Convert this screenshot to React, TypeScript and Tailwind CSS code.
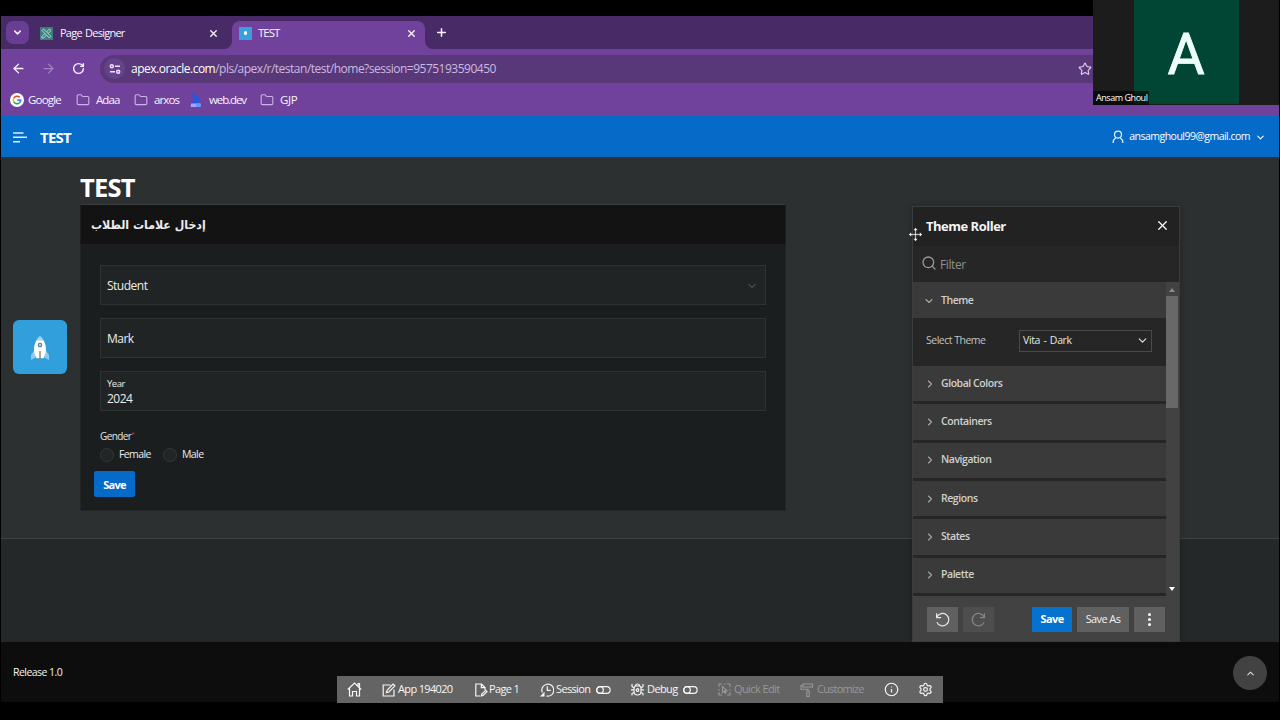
import React from "react";
import {
  ChevronDown,
  ChevronRight,
  ChevronUp,
  X,
  Plus,
  ArrowLeft,
  ArrowRight,
  RotateCw,
  Folder,
  Star,
  Search,
  Info,
  Settings,
} from "lucide-react";

type IconProps = { className?: string };

const ApexIcon = () => (
  <svg className="h-[13px] w-[13px]" viewBox="0 0 13 13">
    <rect width="13" height="13" fill="#3b7f7d" />
    <g stroke="#c0ddd4" strokeWidth="1" fill="none">
      <path d="M2 3.6 3.6 2l7.4 7.4L9.4 11zM9.4 2 11 3.6 8.2 6.4M4.8 6.6 2 9.4 1.9 11.1 3.6 11l2.8-2.8M6.5 4.9 9.4 2" />
    </g>
  </svg>
);

const TuneIcon = () => (
  <svg className="h-3 w-3" viewBox="0 0 12 12" fill="none" stroke="#efe4fa" strokeWidth="1.5">
    <circle cx="2.8" cy="3.2" r="1.5" />
    <path d="M6 3.2h5M1 8.8h5" />
    <circle cx="9.2" cy="8.8" r="1.5" />
  </svg>
);

const GoogleIcon = () => (
  <svg className="h-[14px] w-[14px]" viewBox="0 0 14 14" fill="none" strokeWidth="1.6">
    <circle cx="7" cy="7" r="7" fill="#fff" />
    <path d="M9.6 4.3A3.7 3.7 0 0 0 3.8 5.2" stroke="#ea4335" />
    <path d="M3.8 5.2a3.7 3.7 0 0 0 0 3.6" stroke="#fbbc05" />
    <path d="M3.8 8.8a3.7 3.7 0 0 0 5.6 1" stroke="#34a853" />
    <path d="M9.4 9.8A3.7 3.7 0 0 0 10.7 7.1H7.2" stroke="#4285f4" />
  </svg>
);

const WebDevIcon = () => (
  <svg className="h-[15px] w-[12px]" viewBox="0 0 12 15">
    <path d="M2.5 0 9 4.8c1.4 1.2 1.4 2.6 0 3.8L7.6 10H1l4.2-3.4L1.8 3z" fill="#2456e8" />
    <path d="M1 10.6h9.6v2.2c0 .8-.5 1.3-1.3 1.3H1.6c-.8 0-1-.6-.8-1.3z" fill="#a9a4fb" />
    <path d="M6 10.6h4.6v2.2c0 .8-.5 1.3-1.3 1.3H6z" fill="#5f9bfb" />
  </svg>
);

const UserIcon = () => (
  <svg className="h-[14px] w-3" viewBox="0 0 12 14" fill="none" stroke="#e4f3ff" strokeWidth="1.2">
    <circle cx="6" cy="4.6" r="3.5" />
    <path d="M1 13c.1-2.6 1-4 2.800-5.200M11 13c-.1-2.6-1-4-2.800-5.200" />
  </svg>
);

const RocketIcon = () => (
  <svg className="mt-px h-6 w-5" viewBox="0 0 20 24">
    <path d="M10 0c2 1.200 3.200 3 3.600 5H6.400C6.800 3 8 1.200 10 0z" fill="#a5d3f0" />
    <path d="M4.500 14 1 19v5l4.600-2.600zM15.500 14l3.500 5v5l-4.600-2.600z" fill="#8fcaf0" />
    <path d="M6.300 4.500h7.400c2 3.700 2.700 7.500 2 11.500-.4 2.500-1.200 4.500-2.200 6.300h-7c-1-1.800-1.800-3.800-2.200-6.300-.7-4 0-7.800 2-11.500z" fill="#fff" />
    <circle cx="10" cy="9" r="1.700" fill="#c6dbe6" stroke="#4f7388" strokeWidth="1.100" />
    <path d="M10 15v8" stroke="#8a8078" strokeWidth="1.400" />
  </svg>
);

const UndoIcon = ({ className }: IconProps) => (
  <svg className={className} viewBox="0 0 16 16" fill="none" stroke="currentColor" strokeWidth="1.3">
    <path d="M1.700 1.200v4.800h4.800M2 5.600A6.600 6.600 0 1 1 2 10.800" />
  </svg>
);

const HomeIcon = () => (
  <svg className="h-[15px] w-[15px]" viewBox="0 0 15 15" fill="none" stroke="currentColor" strokeWidth="1.2">
    <path d="M.8 7.500 7.500 1l6.700 6.500M2.500 6v8h3V9.500h4V14h3V6M11 4.200V1.500h1.500v4" />
  </svg>
);
const EditIcon = () => (
  <svg className="h-[14px] w-[14px]" viewBox="0 0 14 14" fill="none" stroke="currentColor" strokeWidth="1.2">
    <path d="M8.500 2H1.200v11H12V6.500M4.500 9.700l.6-2.400L11 1l1.900 1.800-6 6.200z" />
  </svg>
);
const PageIcon = () => (
  <svg className="h-[14px] w-[14px]" viewBox="0 0 14 14" fill="none" stroke="currentColor" strokeWidth="1.2">
    <path d="M6 13H1.800V1h5.700L11 4.500V7M7.300 1v3.700H11M7.300 12.900l.4-1.900 4-3.600 1.300 1.400-4 3.600z" />
  </svg>
);
const SessionIcon = () => (
  <svg className="h-[14px] w-[14px]" viewBox="0 0 14 14" fill="none" stroke="currentColor" strokeWidth="1.2">
    <path d="M2.300 9.500A6 6 0 1 1 6.500 13M7.300 3.300v4h3.400" />
    <path d="M4.500 8.800v4.700H0z" fill="currentColor" stroke="none" />
  </svg>
);
const BugIcon = () => (
  <svg className="h-[13px] w-[13px]" viewBox="0 0 13 13" fill="none" stroke="currentColor" strokeWidth="1.2">
    <path d="M3 5.500c0-1 .5-2 1.200-2.500h4.600C9.500 3.500 10 4.500 10 5.500v3a3.500 3.500 0 0 1-7 0zM4.500 3a2 2 0 0 1 4 0M0 6.800h3M10 6.800h3M3 5 1 3.500V1M10 5l2-1.500V1M3.300 9.300 1 10.500v2M9.700 9.300 12 10.500v2" />
    <circle cx="6.500" cy="7" r="1.300" />
  </svg>
);
const QuickEditIcon = () => (
  <svg className="h-[13px] w-[13px]" viewBox="0 0 13 13" fill="none" stroke="currentColor" strokeWidth="1.1">
    <path d="M1 4V1h3M9 1h3v3M12 9v3H9M4 12H1V9M6 1h1.500M1 6v1.500M12 6v1.500" />
    <path d="M4.500 3.500v6l1.500-1.300 1 2 1-.5-.9-1.900H9z" />
  </svg>
);
const RollerIcon = () => (
  <svg className="h-[14px] w-[14px]" viewBox="0 0 14 14" fill="none" stroke="currentColor" strokeWidth="1.1">
    <path d="M3 1h9.500v3H3zM3 2.500H1v3.700h7V8M6.800 8h2.400v5.500H6.800z" />
  </svg>
);
const ToggleIcon = () => (
  <svg className="h-2 w-[15px]" viewBox="0 0 15 8" fill="none" stroke="currentColor" strokeWidth="1.2">
    <rect x=".7" y=".7" width="13.400" height="6.600" rx="3.300" />
    <rect x=".7" y=".7" width="6.600" height="6.600" rx="3.300" />
  </svg>
);

const MoveCursor = () => (
  <svg className="absolute left-[908px] top-[227px] h-[15px] w-[15px]" viewBox="0 0 15 15">
    <path
      d="M7.500 .5 10 3.500H8.200v3.300h3.300V5l3 2.500-3 2.500V8.200H8.200v3.300H10l-2.500 3-2.500-3h1.800V8.200H3.500V10l-3-2.500 3-2.500v1.800h3.300V3.500H5z"
      fill="#fff"
      stroke="#000"
      strokeWidth=".5"
    />
  </svg>
);

const bookmarks = [
  { label: "Adaa", cls: "w-[58px]" },
  { label: "arxos", cls: "w-[56px]" },
];

const sections = ["Global Colors", "Containers", "Navigation", "Regions", "States", "Palette"];

const BrowserChrome = () => (
  <div className="flex h-[100px] shrink-0 flex-col bg-[#70429c] text-[#f8f2fd]">
    <div className="flex h-[33px] bg-[#482b66] pl-[5px]">
      <div className="mt-[5px] flex h-[23px] w-[23px] items-center justify-center rounded-[7px] bg-[#6a3d95]">
        <ChevronDown size={11} strokeWidth={3.200} />
      </div>
      <div className="flex h-[34px] w-[203px] items-center pl-[11px] pr-[13px]">
        <ApexIcon />
        <span className="ml-[7px] whitespace-nowrap text-[11px] tracking-[-0.75px] [word-spacing:1px]">Page Designer</span>
        <X className="ml-auto" size={11} strokeWidth={3} />
      </div>
      <div className="relative mt-[5px] flex h-7 w-[193px] items-center rounded-t-[8px] bg-[#70429c] pb-1 pl-[7px] pr-[8px]">
        <svg className="absolute -left-[8px] bottom-0 h-2 w-2" viewBox="0 0 8 8">
          <path d="M8 0v8H0a8 8 0 0 0 8-8z" fill="#70429c" />
        </svg>
        <svg className="absolute -right-[8px] bottom-0 h-2 w-2" viewBox="0 0 8 8">
          <path d="M0 0v8h8a8 8 0 0 1-8-8z" fill="#70429c" />
        </svg>
        <div className="flex h-[13px] w-[13px] items-center justify-center bg-[#3aa0dd]">
          <div className="h-1 w-[3px] rounded-full bg-white" />
        </div>
        <span className="ml-[6px] text-[11.5px] tracking-[-1px]">TEST</span>
        <X className="ml-auto" size={11} strokeWidth={3} />
      </div>
      <Plus className="ml-[10px] mt-[10px]" size={13} strokeWidth={2.800} />
    </div>
    <div className="flex h-[39px] items-center pl-[10px]">
      <ArrowLeft size={15} strokeWidth={2.200} />
      <ArrowRight className="ml-[15px] text-[#a183c2]" size={15} strokeWidth={2} />
      <RotateCw className="ml-4" size={13} strokeWidth={2.500} />
      <div className="ml-[15px] flex h-7 flex-1 items-center rounded-l-full bg-[#583878] pl-1">
        <div className="flex h-[21px] w-[21px] items-center justify-center rounded-full bg-[#66428c]">
          <TuneIcon />
        </div>
        <span className="ml-[6px] mt-px whitespace-nowrap text-[12px] tracking-[-0.5px] text-[#cdb8e0]">
          <span className="text-white">apex.oracle.com</span>/pls/apex/r/testan/test/home?session=9575193590450
        </span>
        <Star className="ml-auto mr-[187px] text-[#dccbee]" size={14} strokeWidth={2} />
      </div>
    </div>
    <div className="flex h-6 items-center pl-[9px] text-[11.5px] tracking-[-0.7px]">
      <GoogleIcon />
      <span className="ml-[4px] w-[48px] tracking-[-0.8px]">Google</span>
      {bookmarks.map((b) => (
        <div key={b.label} className={`flex items-center ${b.cls}`}>
          <Folder className="w-[14px] text-[#cdb2ea]" size={14} strokeWidth={1.900} />
          <span className="ml-[6px] tracking-[-0.9px]">{b.label}</span>
        </div>
      ))}
      <WebDevIcon />
      <span className="ml-[7px] w-[51px] tracking-[-1.1px]">web.dev</span>
      <Folder className="text-[#cdb2ea]" size={14} strokeWidth={1.900} />
      <span className="ml-[6px] tracking-[-0.4px]">GJP</span>
    </div>
  </div>
);

const AppHeader = () => (
  <div className="flex h-[41px] shrink-0 items-center bg-[#056ac8] pl-3 pr-[13px] pt-px text-white">
    <svg className="h-[11px] w-[14px]" viewBox="0 0 14 11" stroke="#d5f3ff" strokeWidth="1.400">
      <path d="M0 1h10.500M0 5.300h14M0 9.700h7" />
    </svg>
    <span className="ml-[13px] mt-px text-[15px] font-bold tracking-[-0.8px]">TEST</span>
    <div className="ml-auto flex items-center">
      <UserIcon />
      <span className="ml-[5px] mr-[5px] whitespace-nowrap text-[10.5px] tracking-[-0.52px] text-white">ansamghoul99@gmail.com</span>
      <ChevronDown size={11} strokeWidth={2.200} />
    </div>
  </div>
);

const field = "flex h-10 w-[666px] border border-[#2e3233] bg-[#212425] px-[6px] text-[12px] tracking-[-0.5px] text-[#ededed]";

const FormRegion = () => (
  <div className="w-[706px]">
    <div className="flex h-[41px] items-center border border-[#1d1f1f] border-t-[#3a3d3e] bg-[#131313] px-[10px] pt-[2px]">
      <h2 dir="rtl" className="font-['DejaVu_Sans_Condensed','DejaVu_Sans',sans-serif] text-[12.25px] font-bold [font-stretch:75%] text-[#ececec]">إدخال علامات الطلاب</h2>
    </div>
    <div className="h-[266px] border border-t-0 border-[#222627] bg-[#1b1e1f] pl-[13px] pt-5">
      <div className="flex flex-col gap-[13px] pl-[6px]">
        <div className={`${field} items-center justify-between pt-[2px]`}>
          <span>Student</span>
          <ChevronDown className="mr-[1px] text-[#6f7374]" size={12} strokeWidth={1.800} />
        </div>
        <div className={`${field} items-center pt-[2px]`}>Mark</div>
        <div className={`${field} flex-col pt-[4px]`}>
          <span className="text-[9.5px] leading-[15px]">Year</span>
          <span className="leading-4">2024</span>
        </div>
      </div>
      <div className="mt-[17px] pl-[6px] text-[10px] leading-4 tracking-[-0.6px] text-[#e4e4e4]">
        Gender<span className="align-super text-[6px] leading-none text-[#e03c2c]">*</span>
      </div>
      <div className="mt-[3px] flex h-4 items-center pl-[6px] text-[10.5px] tracking-[-0.6px] text-[#ececec]">
        <span className="mr-[5px] h-[14px] w-[14px] rounded-full border border-[#353838] bg-[#222525]" />
        <span className="w-[44px]">Female</span>
        <span className="mr-[5px] h-[14px] w-[14px] rounded-full border border-[#353838] bg-[#222525]" />
        <span>Male</span>
      </div>
      <button className="mt-2 flex h-[26px] w-[41px] items-center justify-center rounded-[2px] bg-[#056ac8] pt-[2px] text-[11px] font-bold tracking-[-0.7px] text-white">
        Save
      </button>
    </div>
  </div>
);

const btn = "flex h-[25px] items-center justify-center";

const ThemeRoller = () => (
  <div className="absolute left-[912px] top-[206px] flex h-[436px] w-[268px] flex-col border border-[#3a3d3e] bg-[#424242] shadow-[0_0_6px_rgba(0,0,0,0.25)]">
    <div className="flex h-[39px] shrink-0 items-center justify-between bg-[#222222] pl-[13px] pr-[9px]">
      <span className="mt-px text-[13px] font-bold tracking-[-0.5px] text-[#f4f4f4]">Theme Roller</span>
      <X className="-mt-[2px] text-white" size={15} strokeWidth={1.900} />
    </div>
    <div className="flex h-9 shrink-0 items-center bg-[#262626] pl-2 text-[#8f8f8f]">
      <Search className="-mt-[2px] text-[#9a9a9a]" size={16} strokeWidth={1.900} />
      <span className="ml-[3px] mt-[2px] text-[12px] tracking-[-0.4px]">Filter</span>
    </div>
    <div className="flex h-[314px] shrink-0">
      <div className="flex w-[253px] flex-col bg-[#262626] text-[10.5px] font-semibold tracking-[-0.45px] text-[#d0d0d0]">
        <div className="flex h-9 shrink-0 items-center bg-[#3a3a3a] pl-[10px] pt-px">
          <ChevronDown className="text-[#a8a8a8]" size={12} strokeWidth={2.200} />
          <span className="ml-[6px]">Theme</span>
        </div>
        <div className="flex h-12 shrink-0 items-center justify-between pb-[3px] pl-[13px] pr-[14px] font-normal">
          <span className="tracking-[-0.5px] text-[#c2c2c2]">Select Theme</span>
          <div className="flex h-[22px] w-[133px] items-center justify-between border border-[#4a4a4a] pl-[3px] pr-[2px] text-[#e2e6e2] tracking-[-0.35px] [word-spacing:1px]">
            Vita - Dark
            <ChevronDown size={13} strokeWidth={2} />
          </div>
        </div>
        <div className="flex flex-1 flex-col">
          {sections.map((s) => (
            <div key={s} className="flex flex-1 items-center border-b-[3px] border-[#262626] bg-[#3a3a3a] pl-[11px]">
              <ChevronRight className="text-[#a8a8a8]" size={12} strokeWidth={2.200} />
              <span className="ml-[5px]">{s}</span>
            </div>
          ))}
        </div>
      </div>
      <div className="flex flex-1 flex-col items-center bg-[#424242] pr-px pt-[6px]">
        <div className="h-0 w-0 border-x-[3px] border-b-[4px] border-x-transparent border-b-[#8a8a8a]" />
        <div className="mt-1 h-[112px] w-3 bg-[#686868]" />
        <div className="mb-[5px] mt-auto h-0 w-0 border-x-[3px] border-t-[4px] border-x-transparent border-t-white" />
      </div>
    </div>
    <div className="flex flex-1 items-center pb-0 pl-[14px] pr-[14px] pt-px text-[11px] tracking-[-0.6px]">
      <div className={`${btn} w-[31px] bg-[#606060] text-[#e6e6e6]`}>
        <UndoIcon className="h-[15px] w-[15px]" />
      </div>
      <div className={`${btn} ml-[5px] w-[31px] bg-[#4e4e4e] text-[#858585]`}>
        <UndoIcon className="h-[15px] w-[15px] -scale-x-100" />
      </div>
      <div className={`${btn} ml-auto w-10 bg-[#0572ce] pt-px font-bold text-white`}>Save</div>
      <div className={`${btn} ml-[5px] w-[52px] bg-[#606060] pt-px text-[#f0f0f0]`}>Save As</div>
      <div className={`${btn} ml-[5px] w-[31px] flex-col gap-[2px] bg-[#606060]`}>
        <span className="h-[3px] w-[3px] rounded-full bg-white" />
        <span className="h-[3px] w-[3px] rounded-full bg-white" />
        <span className="h-[3px] w-[3px] rounded-full bg-white" />
      </div>
    </div>
  </div>
);

const DevToolbar = () => (
  <div className="absolute left-[337px] top-[676px] flex h-[27px] w-[606px] items-center bg-[#646464] pl-[10px] text-[11px] tracking-[-0.65px] text-[#f6f6f6]">
    <div className="w-[35px]"><HomeIcon /></div>
    <div className="flex w-[92px] items-center whitespace-nowrap"><EditIcon /><span className="ml-[2px]">App 194020</span></div>
    <div className="flex w-[66px] items-center whitespace-nowrap"><PageIcon /><span className="ml-[1px]">Page 1</span></div>
    <div className="flex w-[91px] items-center"><SessionIcon /><span className="ml-[2px] w-[40px]">Session</span><ToggleIcon /></div>
    <div className="flex w-[87px] items-center"><BugIcon /><span className="ml-[3px] w-[36px] tracking-[-0.6px]">Debug</span><ToggleIcon /></div>
    <div className="flex w-[82px] items-center whitespace-nowrap tracking-[-0.6px] text-[#989898]"><QuickEditIcon /><span className="ml-[3px]">Quick Edit</span></div>
    <div className="flex w-[84px] items-center tracking-[-0.8px] text-[#989898]"><RollerIcon /><span className="ml-[3px]">Customize</span></div>
    <div className="w-[34px]"><Info size={15} strokeWidth={1.900} /></div>
    <Settings size={15} strokeWidth={1.900} />
  </div>
);

export default function App() {
  return (
    <div className="relative flex h-[720px] w-[1280px] flex-col overflow-hidden bg-black px-px pt-4 font-['Open_Sans',sans-serif]">
      <BrowserChrome />
      <AppHeader />
      <main className="flex h-[382px] shrink-0 border-b border-[#3d4142] bg-[#2d3031]">
        <div className="flex w-[79px] items-center justify-center pb-px pr-px">
          <div className="flex h-[54px] w-[54px] items-center justify-center rounded-[6px] bg-[#309fdb]">
            <RocketIcon />
          </div>
        </div>
        <div>
          <h1 className="h-[47px] pt-[13px] text-[25.5px] font-bold leading-[34px] tracking-[-0.8px] text-white">TEST</h1>
          <FormRegion />
        </div>
      </main>
      <div className="h-[103px] shrink-0 bg-[#242828]" />
      <footer className="flex h-[60px] shrink-0 items-center bg-[#0d0d0d] pl-3 pt-[2px] text-[10.5px] tracking-[-0.55px] text-[#f4f4f4]">Release 1.0</footer>

      <ThemeRoller />
      <MoveCursor />
      <DevToolbar />
      <div className="absolute left-[1233px] top-[656px] flex h-[34px] w-[34px] items-center justify-center rounded-full bg-[#424242] text-[#e0e0e0]">
        <ChevronUp size={11} strokeWidth={2.200} />
      </div>
      <div className="absolute left-[1093px] top-0 flex h-[105px] w-[186px] justify-center bg-[#1c1c1c]">
        <div className="flex h-[104px] w-[105px] items-center justify-center bg-[#014535]">
          <span className="mt-1 font-[Roboto,sans-serif] text-[57px] leading-none text-[#eefffa] [-webkit-text-stroke:0.8px_#eefffa]">A</span>
        </div>
        <div className="absolute bottom-0 left-0 flex h-[14px] w-[56px] items-center whitespace-nowrap bg-black/60 pl-[3px] text-[9px] tracking-[-0.45px] text-white">
          Ansam Ghoul
        </div>
      </div>
    </div>
  );
}
